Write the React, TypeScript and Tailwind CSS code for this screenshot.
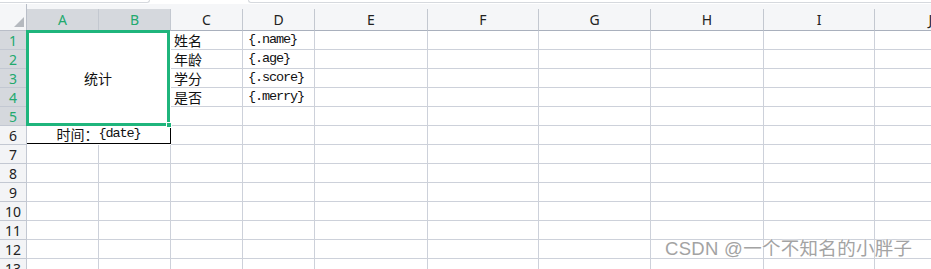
import React from "react";

const cols = [
  { name: "A", w: "w-[72px]", sel: true },
  { name: "B", w: "w-[72px]", sel: true },
  { name: "C", w: "w-[72px]", sel: false },
  { name: "D", w: "w-[72px]", sel: false },
  { name: "E", w: "w-[113px]", sel: false },
  { name: "F", w: "w-[111px]", sel: false },
  { name: "G", w: "w-[112px]", sel: false },
  { name: "H", w: "w-[113px]", sel: false },
  { name: "I", w: "w-[111px]", sel: false },
  { name: "J", w: "w-[112px]", sel: false },
];

const fields = [
  ["姓名", "{.name}"],
  ["年龄", "{.age}"],
  ["学分", "{.score}"],
  ["是否", "{.merry}"],
];

const cn = "font-['Noto_Sans_CJK_SC',sans-serif] text-[14px] text-[#111]";
const mono = "font-['Liberation_Mono','Noto_Sans_CJK_SC',monospace] text-[13.5px] tracking-[-1.1px] text-[#111]";
const head = "font-['Noto_Sans','Liberation_Sans',sans-serif] text-[14px]";

function RowHead({ n }: { n: number }) {
  const sel = n <= 5;
  return (
    <div
      className={`w-[27px] h-[19px] shrink-0 border-r border-b border-[#c3c8d2] flex items-center justify-center ${head} ${
        sel ? "bg-[#d5d8dd] text-[#22a96e]" : "bg-[#f3f4f6] text-[#222]"
      }`}
    >
      {n}
    </div>
  );
}

function Cell({ w, children }: { w: string; children?: React.ReactNode }) {
  return (
    <div className={`${w} h-[19px] shrink-0 border-r border-b border-[#cdd1da] flex items-center overflow-hidden whitespace-nowrap`}>
      {children}
    </div>
  );
}

export default function App() {
  const rest = cols.slice(2);
  return (
    <div className="relative w-[931px] h-[269px] overflow-hidden bg-white">
      {/* formula bar remnants */}
      <div className="h-[4px] flex">
        <div className="w-[150px] h-[3px] border-b border-r border-[#d6d9de] rounded-br-[3px]" />
        <div className="ml-[98px] flex-1 h-[3px] border-b border-l border-[#d6d9de] rounded-bl-[3px]" />
      </div>

      {/* column header */}
      <div className="flex h-[27px] bg-[#f5f6f8]">
        <div className="w-[27px] shrink-0 relative border-r border-b border-[#b9bec8]">
          <div className="absolute right-[2px] bottom-[3px] w-0 h-0 border-l-[10px] border-l-transparent border-b-[10px] border-b-[#b5b9bf]" />
        </div>
        {cols.map((c) => (
          <div key={c.name} className={`${c.w} shrink-0 flex flex-col`}>
            <div className="h-[8px]" />
            <div
              className={`flex-1 flex items-center justify-center border-r border-b ${head} ${
                c.sel
                  ? "bg-[#d5d8dd] text-[#22a96e] border-r-[#c3c8d0] border-b-[#a9b0bd]"
                  : "text-[#222] border-r-[#c3c8d0] border-b-[#a9b0bd]"
              }`}
            >
              {c.name}
            </div>
          </div>
        ))}
      </div>

      {/* rows 1-6 with merged cells */}
      <div className="flex">
        <div className="flex flex-col">
          {[1, 2, 3, 4, 5, 6].map((n) => (
            <RowHead key={n} n={n} />
          ))}
        </div>
        <div className="flex flex-col">
          <div className="relative w-[144px] h-[96px] -ml-px -mt-px border-[3px] border-[#1fb57c] flex items-center justify-center">
            <span className={cn}>统计</span>
            <div className="absolute -right-[5px] -bottom-[5px] w-[6px] h-[6px] bg-[#1fb57c] border border-white" />
          </div>
          <div className="w-[144px] h-[19px] -mt-px border-r border-b border-black flex items-center justify-center">
            <span className={cn}>时间：</span>
            <span className={mono}>{"{date}"}</span>
          </div>
        </div>
        <div className="flex flex-col">
          {[0, 1, 2, 3, 4, 5].map((r) => (
            <div key={r} className="flex">
              {rest.map((c, i) => (
                <Cell key={c.name} w={c.w}>
                  {r < 4 && i === 0 && <span className={`${cn} pl-[3px]`}>{fields[r][0]}</span>}
                  {r < 4 && i === 1 && <span className={`${mono} pl-[5px]`}>{fields[r][1]}</span>}
                </Cell>
              ))}
            </div>
          ))}
        </div>
      </div>

      {/* rows 7-13 */}
      {[7, 8, 9, 10, 11, 12, 13].map((n) => (
        <div key={n} className="flex">
          <RowHead n={n} />
          {cols.map((c) => (
            <Cell key={c.name} w={c.w} />
          ))}
        </div>
      ))}

      <div className="absolute left-[665px] top-[238px] font-['Liberation_Sans','Noto_Sans_CJK_SC',sans-serif] text-[18.5px] tracking-[0.3px] leading-[22px] text-[#a3a3a3] [text-shadow:0_0_1px_#fff,0_0_2px_#fff] whitespace-nowrap">
        CSDN @一个不知名的小胖子
      </div>
    </div>
  );
}
